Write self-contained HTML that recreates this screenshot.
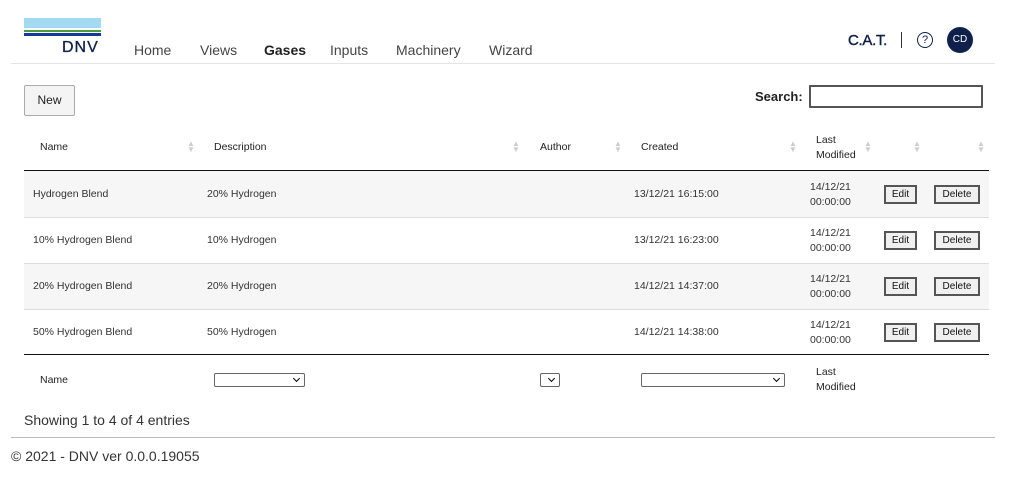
<!DOCTYPE html>
<html><head><meta charset="utf-8"><style>
body{margin:0;width:1016px;height:480px;background:#fff;font-family:"Liberation Sans",sans-serif;color:#333;position:relative;overflow:hidden}
.a{position:absolute;white-space:nowrap}
.nav{font-size:14px;color:#444;top:42px}
.c{font-size:10.5px;color:#333}
.h{font-size:10.5px;color:#222}
.btn{position:absolute;font-size:10px;color:#111;border:2px solid #555;background:#f0f0f0;text-align:center;line-height:15px;height:15px;box-sizing:content-box}
.row{position:absolute;left:24px;width:965px;height:46px;border-top:1px solid #ddd}
.arr{position:absolute;font-size:8px;color:#ccc;line-height:6px}
.sel{position:absolute;border:1px solid #666;border-radius:2px;height:12px;background:#fff}
.sel:after{content:"";position:absolute;right:5px;top:2px;width:4px;height:4px;border-right:1.5px solid #000;border-bottom:1.5px solid #000;transform:rotate(45deg)}
</style></head><body>
<div class="a" style="left:24px;top:18px;width:77px;height:10px;background:#a3d9f1"></div>
<div class="a" style="left:24px;top:30px;width:77px;height:2px;background:#4c9b3b"></div>
<div class="a" style="left:24px;top:33px;width:77px;height:3px;background:#0f3c94"></div>
<div class="a" style="left:62px;top:39px;font-size:16px;color:#0f204b;letter-spacing:1px;-webkit-text-stroke:0.3px #0f204b">DNV</div>
<div class="a nav" style="left:134px">Home</div>
<div class="a nav" style="left:200px">Views</div>
<div class="a nav" style="left:264px;color:#222;font-weight:bold">Gases</div>
<div class="a nav" style="left:330px">Inputs</div>
<div class="a nav" style="left:396px">Machinery</div>
<div class="a nav" style="left:489px">Wizard</div>
<div class="a" style="left:848px;top:32px;font-size:15px;color:#0f204b;-webkit-text-stroke:0.4px #0f204b;letter-spacing:-0.3px">C.A.T.</div>
<div class="a" style="left:901px;top:32px;width:1px;height:16px;background:#333"></div>
<div class="a" style="left:917px;top:32px;width:14px;height:14px;border:1.3px solid #0f204b;border-radius:50%;font-size:11px;text-align:center;line-height:14px;color:#0f204b">?</div>
<div class="a" style="left:947px;top:27px;width:26px;height:26px;background:#0f204b;border-radius:50%;color:#fff;font-size:10px;text-align:center;line-height:26px">CD</div>
<div class="a" style="left:11px;top:63px;width:984px;height:1px;background:#e5e5e5"></div>
<div class="a" style="left:24px;top:85px;width:49px;height:29px;border:1px solid #aaa;border-radius:2px;background:#f4f4f4;font-size:12px;text-align:center;line-height:29px;color:#222">New</div>
<div class="a" style="left:755px;top:89px;font-size:13px;font-weight:bold;color:#222">Search:</div>
<div class="a" style="left:809px;top:85px;width:170px;height:19px;border:2px solid #555;border-radius:1px"></div>
<div class="a h" style="left:40px;top:141px">Name</div>
<div class="a h" style="left:214px;top:141px">Description</div>
<div class="a h" style="left:540px;top:141px">Author</div>
<div class="a h" style="left:641px;top:141px">Created</div>
<div class="a h" style="left:816px;top:133px;line-height:15px">Last<br>Modified</div>
<div class="arr" style="left:187px;top:141px">▲<br>▼</div>
<div class="arr" style="left:512px;top:141px">▲<br>▼</div>
<div class="arr" style="left:614px;top:141px">▲<br>▼</div>
<div class="arr" style="left:789px;top:141px">▲<br>▼</div>
<div class="arr" style="left:864px;top:141px">▲<br>▼</div>
<div class="arr" style="left:913px;top:141px">▲<br>▼</div>
<div class="arr" style="left:977px;top:141px">▲<br>▼</div>
<div class="a" style="left:24px;top:170px;width:965px;height:1px;background:#111"></div>

<div class="row" style="top:171px;background:#f6f6f6;border-top:none"></div>
<div class="row" style="top:217px"></div>
<div class="row" style="top:263px;background:#f6f6f6"></div>
<div class="row" style="top:309px"></div>

<div class="a c" style="left:33px;top:188px">Hydrogen Blend</div>
<div class="a c" style="left:207px;top:188px">20% Hydrogen</div>
<div class="a c" style="left:634px;top:188px">13/12/21 16:15:00</div>
<div class="a c" style="left:810px;top:180px;line-height:15px">14/12/21<br>00:00:00</div>
<div class="a c" style="left:33px;top:234px">10% Hydrogen Blend</div>
<div class="a c" style="left:207px;top:234px">10% Hydrogen</div>
<div class="a c" style="left:634px;top:234px">13/12/21 16:23:00</div>
<div class="a c" style="left:810px;top:226px;line-height:15px">14/12/21<br>00:00:00</div>
<div class="a c" style="left:33px;top:280px">20% Hydrogen Blend</div>
<div class="a c" style="left:207px;top:280px">20% Hydrogen</div>
<div class="a c" style="left:634px;top:280px">14/12/21 14:37:00</div>
<div class="a c" style="left:810px;top:272px;line-height:15px">14/12/21<br>00:00:00</div>
<div class="a c" style="left:33px;top:326px">50% Hydrogen Blend</div>
<div class="a c" style="left:207px;top:326px">50% Hydrogen</div>
<div class="a c" style="left:634px;top:326px">14/12/21 14:38:00</div>
<div class="a c" style="left:810px;top:318px;line-height:15px">14/12/21<br>00:00:00</div>

<div class="btn" style="left:884px;top:185px;width:29px">Edit</div>
<div class="btn" style="left:934px;top:185px;width:42px">Delete</div>
<div class="btn" style="left:884px;top:231px;width:29px">Edit</div>
<div class="btn" style="left:934px;top:231px;width:42px">Delete</div>
<div class="btn" style="left:884px;top:277px;width:29px">Edit</div>
<div class="btn" style="left:934px;top:277px;width:42px">Delete</div>
<div class="btn" style="left:884px;top:323px;width:29px">Edit</div>
<div class="btn" style="left:934px;top:323px;width:42px">Delete</div>

<div class="a" style="left:24px;top:354px;width:965px;height:1px;background:#111"></div>
<div class="a h" style="left:40px;top:374px">Name</div>
<div class="sel" style="left:214px;top:373px;width:89px"></div>
<div class="sel" style="left:540px;top:373px;width:18px"></div>
<div class="sel" style="left:641px;top:373px;width:142px"></div>
<div class="a h" style="left:816px;top:365px;line-height:15px">Last<br>Modified</div>
<div class="a" style="left:24px;top:412px;font-size:14px;color:#333">Showing 1 to 4 of 4 entries</div>
<div class="a" style="left:11px;top:437px;width:984px;height:1px;background:#bbb"></div>
<div class="a" style="left:11px;top:448px;font-size:14px;color:#333">© 2021 - DNV ver 0.0.0.19055</div>
</body></html>
